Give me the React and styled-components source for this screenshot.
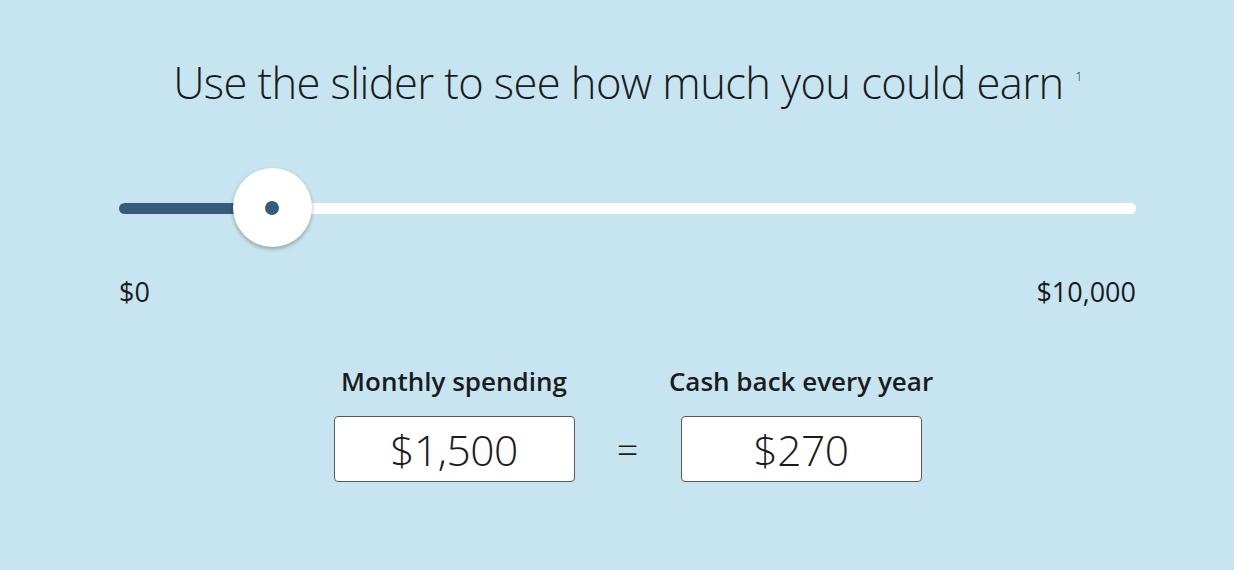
import React, { useState } from 'react'
import styled, { createGlobalStyle } from 'styled-components'

const GlobalStyle = createGlobalStyle`
  html, body {
    margin: 0;
    padding: 0;
    background: #c7e5f1;
  }
  body {
    font-family: 'Open Sans', 'Noto Sans', sans-serif;
    color: #1d1d1f;
  }
`

const Page = styled.div`
  width: 1234px;
  height: 570px;
  background: #c7e5f1;
  box-sizing: border-box;
  padding: 56px 98px 0 119px;
  display: flex;
  flex-direction: column;
  align-items: stretch;
`

const Title = styled.h2`
  margin: 0;
  text-align: center;
  font-weight: 300;
  font-size: 43.5px;
  line-height: 54px;
  letter-spacing: -0.6px;
  color: #1b1b1d;
`

const Sup = styled.sup`
  font-size: 12px;
  vertical-align: top;
  position: relative;
  top: -6px;
  margin-left: 12px;
`

const SliderWrap = styled.div`
  position: relative;
  height: 80px;
  margin-top: 58px;
  display: flex;
  align-items: center;
`

const Track = styled.div`
  flex: 1;
  height: 11px;
  border-radius: 6px;
  background: #ffffff;
  overflow: hidden;
  display: flex;
`

const Fill = styled.div`
  height: 100%;
  background: #365b7c;
`

const Thumb = styled.div`
  position: absolute;
  top: 0;
  width: 79px;
  height: 79px;
  margin-left: -40px;
  border-radius: 50%;
  background: #ffffff;
  box-shadow: 0 2px 4px rgba(0, 0, 0, 0.3);
  display: flex;
  align-items: center;
  justify-content: center;
`

const Dot = styled.div`
  width: 14px;
  height: 14px;
  border-radius: 50%;
  background: #365b7c;
`

const Range = styled.div`
  margin-top: 27px;
  display: flex;
  justify-content: space-between;
  font-size: 27px;
  line-height: 34px;
  color: #1b1b1d;
`

const Calc = styled.div`
  margin-top: 55px;
  display: flex;
  justify-content: center;
  align-items: flex-end;
`

const Field = styled.div`
  display: flex;
  flex-direction: column;
  align-items: center;
  width: 241px;
`

const Label = styled.div`
  font-weight: 600;
  font-size: 26px;
  line-height: 34px;
  margin-bottom: 18px;
  white-space: nowrap;
  color: #1b1b1d;
`

const Box = styled.div`
  box-sizing: border-box;
  width: 241px;
  height: 66px;
  background: #ffffff;
  border: 1px solid #5a5a5a;
  border-radius: 4px;
  display: flex;
  align-items: center;
  justify-content: center;
  font-weight: 300;
  font-size: 42.5px;
  letter-spacing: -0.5px;
  color: #1b1b1d;
`

const Equals = styled.div`
  width: 106px;
  height: 66px;
  display: flex;
  align-items: center;
  justify-content: center;
  font-size: 38px;
  font-weight: 300;
  color: #1b1b1d;
`

const formatMoney = n => '$' + n.toLocaleString('en-US')

export default function App () {
  const [spend] = useState(1500)
  const max = 10000
  const pct = 15.1
  const cashBack = Math.round(spend * 12 * 0.015)

  return (
    <Page>
      <GlobalStyle />
      <Title>
        Use the slider to see how much you could earn<Sup>1</Sup>
      </Title>

      <SliderWrap>
        <Track>
          <Fill style={{ width: `${pct}%` }} />
        </Track>
        <Thumb style={{ left: `${pct}%` }}>
          <Dot />
        </Thumb>
      </SliderWrap>

      <Range>
        <span>$0</span>
        <span>{formatMoney(max)}</span>
      </Range>

      <Calc>
        <Field>
          <Label>Monthly spending</Label>
          <Box>{formatMoney(spend)}</Box>
        </Field>
        <Equals>=</Equals>
        <Field>
          <Label>Cash back every year</Label>
          <Box>{formatMoney(cashBack)}</Box>
        </Field>
      </Calc>
    </Page>
  )
}
